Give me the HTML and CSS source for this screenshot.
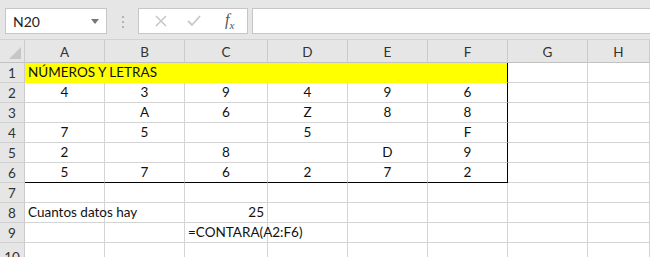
FILE: index.html
```html
<!DOCTYPE html>
<html>
<head>
	<title>CONTARA</title>
	<link rel="stylesheet" href="styles.css">
</head>
<body>
	<div class="toolbar">
		<div class="namebox">
			<span>N20</span>
			<svg class="arrow" width="8" height="5" viewBox="0 0 8 5"><path d="M0 0H8L4 5Z" fill="#777"/></svg>
		</div>
		<div class="dots"><i></i><i></i><i></i></div>
		<div class="fxbox">
			<svg width="12" height="12" viewBox="0 0 12 12"><path d="M1 1L11 11M11 1L1 11" stroke="#c8c8c8" stroke-width="1.6"/></svg>
			<svg width="14" height="12" viewBox="0 0 14 12"><path d="M1 6L5 10L13 1" stroke="#c8c8c8" stroke-width="1.8" fill="none"/></svg>
			<span class="fx">f<sub>x</sub></span>
		</div>
		<div class="formula"></div>
	</div>

	<div class="sheet">
		<div class="corner"><svg width="12" height="12" viewBox="0 0 12 12"><path d="M12 0V12H0Z" fill="#c6c6c6"/></svg></div>
		<div class="colhead">A</div>
		<div class="colhead">B</div>
		<div class="colhead">C</div>
		<div class="colhead">D</div>
		<div class="colhead">E</div>
		<div class="colhead">F</div>
		<div class="colhead">G</div>
		<div class="colhead">H</div>

		<div class="rowhead">1</div>
		<div class="cell title">NÚMEROS Y LETRAS</div>
		<div class="cell yellow"></div>
		<div class="cell yellow"></div>
		<div class="cell yellow"></div>
		<div class="cell yellow"></div>
		<div class="cell yellow edge"></div>
		<div class="cell"></div>
		<div class="cell"></div>

		<div class="rowhead">2</div>
		<div class="cell mid">4</div>
		<div class="cell mid">3</div>
		<div class="cell mid">9</div>
		<div class="cell mid">4</div>
		<div class="cell mid">9</div>
		<div class="cell mid edge">6</div>
		<div class="cell"></div>
		<div class="cell"></div>

		<div class="rowhead">3</div>
		<div class="cell mid"></div>
		<div class="cell mid">A</div>
		<div class="cell mid">6</div>
		<div class="cell mid">Z</div>
		<div class="cell mid">8</div>
		<div class="cell mid edge">8</div>
		<div class="cell"></div>
		<div class="cell"></div>

		<div class="rowhead">4</div>
		<div class="cell mid">7</div>
		<div class="cell mid">5</div>
		<div class="cell mid"></div>
		<div class="cell mid">5</div>
		<div class="cell mid"></div>
		<div class="cell mid edge">F</div>
		<div class="cell"></div>
		<div class="cell"></div>

		<div class="rowhead">5</div>
		<div class="cell mid">2</div>
		<div class="cell mid"></div>
		<div class="cell mid">8</div>
		<div class="cell mid"></div>
		<div class="cell mid">D</div>
		<div class="cell mid edge">9</div>
		<div class="cell"></div>
		<div class="cell"></div>

		<div class="rowhead">6</div>
		<div class="cell mid bottom">5</div>
		<div class="cell mid bottom">7</div>
		<div class="cell mid bottom">6</div>
		<div class="cell mid bottom">2</div>
		<div class="cell mid bottom">7</div>
		<div class="cell mid bottom edge">2</div>
		<div class="cell"></div>
		<div class="cell"></div>

		<div class="rowhead">7</div>
		<div class="cell"></div>
		<div class="cell"></div>
		<div class="cell"></div>
		<div class="cell"></div>
		<div class="cell"></div>
		<div class="cell"></div>
		<div class="cell"></div>
		<div class="cell"></div>

		<div class="rowhead">8</div>
		<div class="cell spill">Cuantos datos hay</div>
		<div class="cell"></div>
		<div class="cell num">25</div>
		<div class="cell"></div>
		<div class="cell"></div>
		<div class="cell"></div>
		<div class="cell"></div>
		<div class="cell"></div>

		<div class="rowhead">9</div>
		<div class="cell"></div>
		<div class="cell"></div>
		<div class="cell spill">=CONTARA(A2:F6)</div>
		<div class="cell"></div>
		<div class="cell"></div>
		<div class="cell"></div>
		<div class="cell"></div>
		<div class="cell"></div>

		<div class="rowhead last">10</div>
		<div class="cell"></div>
		<div class="cell"></div>
		<div class="cell"></div>
		<div class="cell"></div>
		<div class="cell"></div>
		<div class="cell"></div>
		<div class="cell"></div>
		<div class="cell"></div>
	</div>
</body>
</html>
```
FILE: styles.css
```css
body {
	margin: 0;
	width: 650px;
	height: 257px;
	overflow: hidden;
	background: #fff;
	font-family: Lato, "Open Sans", sans-serif;
	color: #111;
}
.toolbar {
	display: flex;
	align-items: flex-start;
	height: 40px;
	box-sizing: border-box;
	padding-top: 8px;
	background: #e6e6e6;
	border-bottom: 1px solid #d2d2d2;
}
.namebox {
	display: flex;
	align-items: center;
	justify-content: space-between;
	box-sizing: border-box;
	width: 102px;
	height: 26px;
	margin-left: 5px;
	padding: 0 7px 0 7px;
	background: #fff;
	border: 1px solid #c6c6c6;
	font-size: 14px;
	color: #222;
}
.dots {
	display: flex;
	flex-direction: column;
	gap: 3px;
	width: 31px;
	align-items: center;
	padding-top: 8px;
}
.dots i {
	display: block;
	width: 2px;
	height: 2px;
	background: #b4b4b4;
}
.fxbox {
	display: flex;
	align-items: center;
	box-sizing: border-box;
	width: 110px;
	height: 26px;
	padding: 0 0 0 16px;
	gap: 20px;
	background: #fff;
	border: 1px solid #c6c6c6;
}
.fx {
	font-family: "Liberation Serif", serif;
	font-style: italic;
	font-size: 16px;
	color: #555;
	margin-left: 4px;
}
.fx sub {
	font-size: 11px;
}
.formula {
	flex: 1;
	height: 26px;
	box-sizing: border-box;
	margin-left: 4px;
	background: #fff;
	border: 1px solid #c6c6c6;
	border-right: none;
}
.sheet {
	display: grid;
	grid-template-columns: 25px 80px 80px 83px 80px 80px 80px 80px 62px;
	grid-template-rows: 23px repeat(10, 20px);
	font-size: 13.5px;
}
.corner, .colhead, .rowhead {
	background: #e6e6e6;
	color: #333;
	box-sizing: border-box;
	border-right: 1px solid #cbcbcb;
	border-bottom: 1px solid #c2c2c2;
}
.corner {
	display: flex;
	align-items: flex-end;
	justify-content: flex-end;
	padding: 0 3px 3px 0;
}
.colhead {
	display: flex;
	align-items: center;
	justify-content: center;
	padding-top: 2px;
}
.rowhead {
	display: flex;
	align-items: center;
	justify-content: center;
	padding-top: 1px;
	border-bottom-color: #d0d0d0;
}
.rowhead.last {
	align-items: flex-start;
	padding-top: 8px;
	line-height: 1;
}
.cell {
	box-sizing: border-box;
	border-right: 1px solid #d4d4d4;
	border-bottom: 1px solid #d4d4d4;
	display: flex;
	align-items: center;
	white-space: nowrap;
	padding: 1px 3px 0;
	line-height: 1;
}
.title {
	background: #ffff00;
	border-right-color: #ffff00;
	border-bottom-color: #ffff00;
	overflow: visible;
	z-index: 1;
}
.yellow {
	background: #ffff00;
	border-right-color: #ffff00;
	border-bottom-color: #ffff00;
}
.mid {
	justify-content: center;
}
.num {
	justify-content: flex-end;
}
.spill {
	overflow: visible;
}
.edge {
	border-right: 1px solid #000;
}
.bottom {
	border-bottom: 1px solid #000;
}
```
